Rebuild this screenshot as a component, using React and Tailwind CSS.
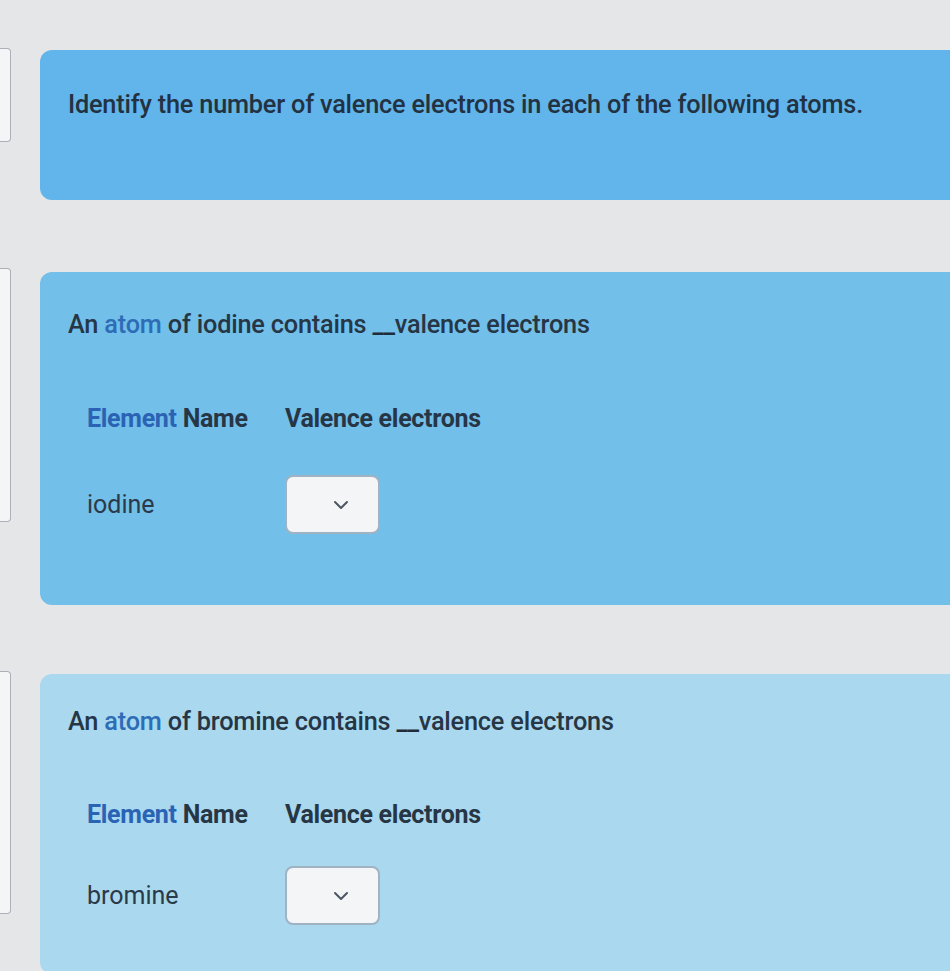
import React from "react";

const font = { fontFamily: "Roboto, 'Noto Sans', Arial, sans-serif" };

function Chevron() {
  return (
    <svg width="16" height="10" viewBox="0 0 16 10" fill="none" className="ml-4">
      <path d="M2 2l6 6 6-6" stroke="#4b5563" strokeWidth="2" strokeLinecap="round" strokeLinejoin="round" />
    </svg>
  );
}

function Select() {
  return (
    <div className="flex h-[59px] w-[95px] items-center justify-center rounded-lg border-2 border-[#9fb3c2] bg-[#f3f5f7]">
      <Chevron />
    </div>
  );
}

function Stub({ h }) {
  return <div className={`w-[11px] shrink-0 rounded-r-sm border border-l-0 border-[#aab1b8] bg-[#f4f5f6] ${h}`} />;
}

function Question({ element, bg, stubH, panelH, pad, headerGap, rowGap }) {
  return (
    <div className="flex items-start gap-[29px]">
      <Stub h={stubH} />
      <div className={`flex-1 rounded-l-xl ${bg} ${panelH} ${pad} pl-[28px]`}>
        <p className="text-[25.3px] font-medium leading-8 text-[#263645] tracking-[-0.2px]">
          An <span className="text-[#2d6db6]">atom</span> of {element} contains <span className="text-[#1f2d3a]">__</span>valence electrons
        </p>
        <div className={`pl-[19px] ${headerGap}`}>
          <div className="flex items-center text-[25px] font-bold leading-8 text-[#263645] tracking-[-0.3px]">
            <div className="w-[198px]">
              <span className="text-[#2a63b4]">Element</span> Name
            </div>
            <div>Valence electrons</div>
          </div>
          <div className={`flex items-center ${rowGap}`}>
            <div className="w-[198px] text-[25px] leading-8 text-[#2b3a48]">{element}</div>
            <Select />
          </div>
        </div>
      </div>
    </div>
  );
}

export default function App() {
  return (
    <div style={font} className="min-h-[971px] overflow-hidden bg-[#e4e6e8] pt-[48px]">
      <div className="flex items-start gap-[29px]">
        <Stub h="h-[94px]" />
        <div className="mt-[2px] h-[150px] flex-1 rounded-l-xl bg-[#62b5ea] pl-[28px] pt-[39px]">
          <p className="text-[25.3px] font-medium leading-8 text-[#223242] tracking-[-0.2px]">
            Identify the number of valence electrons in each of the following atoms.
          </p>
        </div>
      </div>

      <div className="mt-[68px]">
        <Question
          element="iodine"
          bg="bg-[#72bfea] mt-[4px]"
          stubH="h-[254px]"
          panelH="h-[333px]"
          pad="pt-[37px]"
          headerGap="mt-[62px]"
          rowGap="mt-[40px]"
        />
      </div>

      <div className="mt-[66px]">
        <Question
          element="bromine"
          bg="bg-[#a9d8ef] mt-[3px]"
          stubH="h-[243px]"
          panelH="h-[300px]"
          pad="pt-[32px]"
          headerGap="mt-[61px]"
          rowGap="mt-[35px]"
        />
      </div>
    </div>
  );
}
